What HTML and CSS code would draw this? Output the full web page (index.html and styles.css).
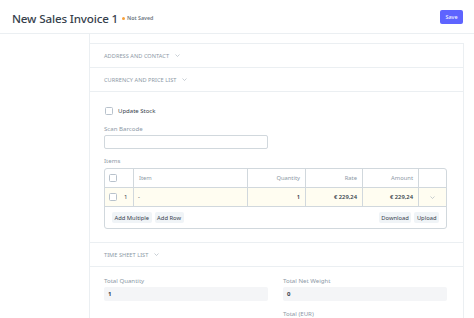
FILE: index.html
```html
<!DOCTYPE html>
<html lang="en">
<head>
<meta charset="utf-8">
<title>New Sales Invoice 1</title>
<link rel="stylesheet" href="styles.css">
</head>
<body>
<div class="page">
  <header class="topbar">
    <div class="title-wrap">
      <h1 class="title">New Sales Invoice 1</h1>
      <span class="indicator"><span class="dot"></span>Not Saved</span>
    </div>
    <button class="btn-primary">Save</button>
  </header>
  <div class="layout">
    <aside class="sidebar"></aside>
    <main class="main">
      <div class="card">
        <div class="sec-head">
          <span class="sec-title">Address and Contact</span>
          <svg class="chev" viewBox="0 0 10 6"><path d="M1 1l4 4 4-4" fill="none" stroke="currentColor" stroke-width="1.2"/></svg>
        </div>
        <div class="sec-head">
          <span class="sec-title">Currency and Price List</span>
          <svg class="chev" viewBox="0 0 10 6"><path d="M1 1l4 4 4-4" fill="none" stroke="currentColor" stroke-width="1.2"/></svg>
        </div>
        <div class="sec-body">
          <label class="check-row"><span class="checkbox"></span><span class="check-label">Update Stock</span></label>
          <div class="field half">
            <div class="label">Scan Barcode</div>
            <div class="input"></div>
          </div>
          <div class="label items-label">Items</div>
          <div class="grid">
            <div class="grow head">
              <div class="cell c-idx"><span class="checkbox"></span></div>
              <div class="cell">Item</div>
              <div class="cell right">Quantity</div>
              <div class="cell right">Rate</div>
              <div class="cell right">Amount</div>
              <div class="cell last"></div>
            </div>
            <div class="grow data">
              <div class="cell c-idx"><span class="checkbox"></span><span class="idx">1</span></div>
              <div class="cell dash">-</div>
              <div class="cell right bold">1</div>
              <div class="cell right bold">€ 229,24</div>
              <div class="cell right bold">€ 229,24</div>
              <div class="cell last center">
                <svg class="chev" viewBox="0 0 10 6"><path d="M1 1l4 4 4-4" fill="none" stroke="currentColor" stroke-width="1.2"/></svg>
              </div>
            </div>
            <div class="gfoot">
              <div class="btns">
                <button class="btn">Add Multiple</button>
                <button class="btn">Add Row</button>
              </div>
              <div class="btns">
                <button class="btn">Download</button>
                <button class="btn">Upload</button>
              </div>
            </div>
          </div>
        </div>
        <div class="sec-head">
          <span class="sec-title">Time Sheet List</span>
          <svg class="chev" viewBox="0 0 10 6"><path d="M1 1l4 4 4-4" fill="none" stroke="currentColor" stroke-width="1.2"/></svg>
        </div>
        <div class="sec-body cols">
          <div class="col">
            <div class="label">Total Quantity</div>
            <div class="input ro">1</div>
          </div>
          <div class="col">
            <div class="label">Total Net Weight</div>
            <div class="input ro">0</div>
            <div class="label next">Total (EUR)</div>
          </div>
        </div>
      </div>
    </main>
  </div>
</div>
</body>
</html>
```
FILE: styles.css
```css
* { box-sizing: border-box; }
html, body { margin: 0; padding: 0; background: #fff; }
body {
  font-family: "Noto Sans", "Open Sans", sans-serif;
  color: #36414c;
  width: 474px;
  height: 318px;
  overflow: hidden;
}
.topbar {
  height: 34px;
  border-bottom: 1px solid #ebeff2;
  display: flex;
  align-items: center;
  justify-content: space-between;
  padding: 0 11px 0 12px;
}
.title-wrap { display: flex; align-items: center; gap: 4px; padding-top: 3px; }
.title {
  margin: 0;
  font-size: 11.6px;
  font-weight: 500;
  color: #36414c;
  letter-spacing: -0.15px;
}
.indicator {
  display: flex;
  align-items: center;
  gap: 2px;
  font-size: 5.3px;
  color: #6c7680;
  font-weight: 600;
}
.dot { width: 3px; height: 3px; border-radius: 50%; background: #f8a13a; }
.btn-primary {
  width: 23px;
  height: 14px;
  padding: 0;
  border: none;
  border-radius: 2px;
  background: #5e64ff;
  color: #fff;
  font-family: inherit;
  font-size: 5.5px;
}
.layout { display: flex; height: 284px; }
.sidebar { width: 90px; border-right: 1px solid #ebeff2; flex: none; }
.main { flex: 1; padding: 9px 10px 0 0; }
.card {
  border-top: 1px solid #ebeff2;
  border-right: 1px solid #ebeff2;
  height: 100%;
}
.sec-head {
  height: 24px;
  display: flex;
  align-items: center;
  gap: 6px;
  padding-left: 14px;
  border-bottom: 1px solid #ebeff2;
  color: #8d99a6;
}
.sec-title {
  text-transform: uppercase;
  font-size: 5.6px;
  letter-spacing: 0.05px;
}
.chev { width: 5px; height: 3px; color: #a5b0ba; }
.sec-body {
  padding: 14px 16px 13px 14px;
  border-bottom: 1px solid #ebeff2;
}
.check-row { display: flex; align-items: center; gap: 5px; height: 9px; margin-left: 1px; }
.checkbox {
  width: 8px;
  height: 8px;
  border: 1px solid #b8c2cc;
  border-radius: 1.5px;
  background: #fff;
  display: inline-block;
  flex: none;
}
.check-label { font-size: 6px; color: #36414c; }
.label { font-size: 6.1px; color: #8d99a6; line-height: 9px; }
.field.half { width: 164px; margin-top: 9px; }
.field .label { margin-bottom: 2px; }
.input {
  height: 14px;
  border: 1px solid #d1d8dd;
  border-radius: 2px;
  background: #fff;
}
.items-label { margin-top: 7px; margin-bottom: 3px; }
.grid {
  border: 1px solid #d1d8dd;
  border-radius: 3px;
  font-size: 5.8px;
}
.grow {
  display: grid;
  grid-template-columns: 29px 114px 58px 57px 56px 1fr;
  height: 19px;
  border-bottom: 1px solid #d1d8dd;
}
.grow.head { color: #8d99a6; }
.grow.data { background: #fffdf1; color: #36414c; }
.cell {
  border-right: 1px solid #d1d8dd;
  display: flex;
  align-items: center;
  padding: 0 5px;
}
.cell.last { border-right: none; }
.cell.right { justify-content: flex-end; }
.cell.center { justify-content: center; }
.cell.bold { font-weight: 600; }
.c-idx { padding-left: 4px; gap: 7px; }
.idx { font-size: 6px; }
.dash { padding-left: 4px; }
.gfoot {
  height: 21px;
  display: flex;
  justify-content: space-between;
  align-items: center;
  padding: 0 7px;
}
.btns { display: flex; gap: 3px; }
.btn {
  height: 11px;
  border: none;
  border-radius: 2px;
  background: #f0f4f7;
  color: #36414c;
  font-family: inherit;
  font-size: 5.8px;
  padding: 0 2.5px;
}
.sec-body.cols {
  display: flex;
  gap: 15px;
  border-bottom: none;
  padding-top: 9px;
}
.col { width: 164px; }
.col .label { margin-bottom: 2px; }
.input.ro {
  border: none;
  background: #f4f5f7;
  font-size: 6px;
  font-weight: 700;
  display: flex;
  align-items: center;
  padding-left: 4px;
  color: #36414c;
}
.label.next { margin-top: 8px; }
```
